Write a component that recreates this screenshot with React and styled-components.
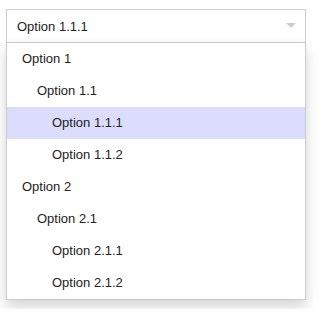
import React from "react";
import styled, { createGlobalStyle } from "styled-components";

const Global = createGlobalStyle`
  html, body { margin: 0; padding: 0; background: #fff; }
  body { font-family: "Liberation Sans", Arial, sans-serif; }
`;

const Page = styled.div`
  padding: 9px 6px;
`;

const Wrapper = styled.div`
  position: relative;
  width: 300px;
`;

const Control = styled.div`
  box-sizing: border-box;
  height: 34px;
  border: 1px solid #ccc;
  background: #fff;
  display: flex;
  align-items: center;
  justify-content: space-between;
  padding: 0 9px 0 10px;
  font-size: 13px;
  color: #222;
`;

const Caret = styled.span`
  width: 0;
  height: 0;
  border-left: 5px solid transparent;
  border-right: 5px solid transparent;
  border-top: 5px solid #ccc;
  margin-top: -1px;
`;

const Menu = styled.ul`
  box-sizing: border-box;
  list-style: none;
  margin: 0;
  padding: 0;
  border: 1px solid #ccc;
  border-top: none;
  background: #fff;
  box-shadow: 0 6px 12px rgba(0, 0, 0, 0.175);
`;

const Item = styled.li`
  box-sizing: border-box;
  height: 32px;
  display: flex;
  align-items: center;
  padding-left: ${(p) => 15 + p.$level * 15}px;
  padding-bottom: 1px;
  font-size: 13px;
  color: #222;
  background: ${(p) => (p.$active ? "#dcdcfc" : "#fff")};
`;

const options = [
  { label: "Option 1", level: 0 },
  { label: "Option 1.1", level: 1 },
  { label: "Option 1.1.1", level: 2, active: true },
  { label: "Option 1.1.2", level: 2 },
  { label: "Option 2", level: 0 },
  { label: "Option 2.1", level: 1 },
  { label: "Option 2.1.1", level: 2 },
  { label: "Option 2.1.2", level: 2 },
];

export default function App() {
  return (
    <>
      <Global />
      <Page>
        <Wrapper>
          <Control>
            <span>Option 1.1.1</span>
            <Caret />
          </Control>
          <Menu>
            {options.map((o) => (
              <Item key={o.label} $level={o.level} $active={o.active}>
                {o.label}
              </Item>
            ))}
          </Menu>
        </Wrapper>
      </Page>
    </>
  );
}
